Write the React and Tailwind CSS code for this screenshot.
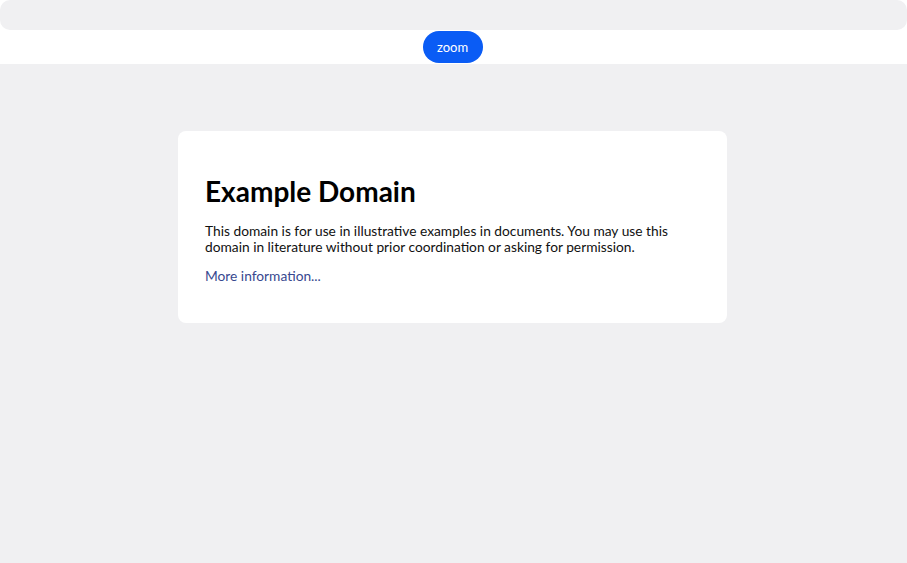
import React from "react";

export default function App() {
    return (
        <div className="min-h-[563px] flex flex-col bg-[#f0f0f2] font-['Lato',sans-serif]">
            <div className="bg-white">
                <div className="h-[30px] rounded-[10px] bg-[#f0f0f2]"></div>
                <div className="h-[34px] flex justify-center items-start pt-px">
                    <button className="h-[32px] w-[60px] mr-[2px] rounded-full bg-[#0a5cf5] text-white text-[13px] leading-none">
                        zoom
                    </button>
                </div>
            </div>
            <div className="flex justify-center pt-[67px]">
                <div className="w-[549px] mr-[2px] bg-white rounded-[8px] px-[27px] pt-[42px] pb-[39px] text-black">
                    <h1 className="text-[28px] font-bold leading-[36px]">Example Domain</h1>
                    <p className="mt-[14px] text-[13.75px] leading-[16px] text-[#111]">
                        This domain is for use in illustrative examples in documents. You may use this domain in literature without prior coordination or asking for permission.
                    </p>
                    <p className="mt-[13px] text-[13.75px] leading-[16px]">
                        <a href="#" className="text-[#38488f]">More information...</a>
                    </p>
                </div>
            </div>
        </div>
    );
}
